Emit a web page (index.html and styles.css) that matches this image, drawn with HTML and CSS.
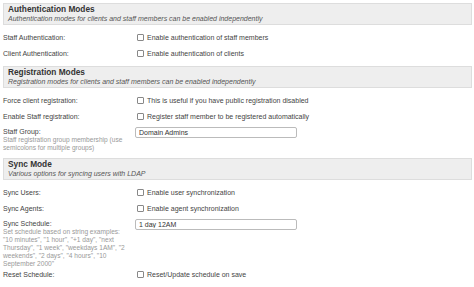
FILE: index.html
```html
<!DOCTYPE html>
<html lang="en">
<head>
  <meta charset="UTF-8">
  <title>LDAP Settings</title>
  <link rel="stylesheet" href="styles.css">
</head>
<body>
  <div class="settings">
    <!-- Authentication -->
    <div class="section-head">
      <div class="section-title">Authentication Modes</div>
      <div class="section-sub">Authentication modes for clients and staff members can be enabled independently</div>
    </div>
    <div class="row">
      <div class="label">Staff Authentication:</div>
      <label class="check"><span class="box"></span>Enable authentication of staff members</label>
    </div>
    <div class="row">
      <div class="label">Client Authentication:</div>
      <label class="check"><span class="box"></span>Enable authentication of clients</label>
    </div>

    <!-- Registration -->
    <div class="section-head">
      <div class="section-title">Registration Modes</div>
      <div class="section-sub">Registration modes for clients and staff members can be enabled independently</div>
    </div>
    <div class="row">
      <div class="label">Force client registration:</div>
      <label class="check"><span class="box"></span>This is useful if you have public registration disabled</label>
    </div>
    <div class="row">
      <div class="label">Enable Staff registration:</div>
      <label class="check"><span class="box"></span>Register staff member to be registered automatically</label>
    </div>
    <div class="row row-tall">
      <div class="label">Staff Group:
        <div class="help">Staff registration group membership (use semicolons for multiple groups)</div>
      </div>
      <div><input class="text-input" type="text" value="Domain Admins"></div>
    </div>

    <!-- Sync -->
    <div class="section-head">
      <div class="section-title">Sync Mode</div>
      <div class="section-sub">Various options for syncing users with LDAP</div>
    </div>
    <div class="row">
      <div class="label">Sync Users:</div>
      <label class="check"><span class="box"></span>Enable user synchronization</label>
    </div>
    <div class="row">
      <div class="label">Sync Agents:</div>
      <label class="check"><span class="box"></span>Enable agent synchronization</label>
    </div>
    <div class="row row-tall">
      <div class="label">Sync Schedule:
        <div class="help">Set schedule based on string examples: "10 minutes", "1 hour", "+1 day", "next Thursday", "1 week", "weekdays 1AM", "2 weekends", "2 days", "4 hours", "10 September 2000"</div>
      </div>
      <div><input class="text-input" type="text" value="1 day 12AM"></div>
    </div>
    <div class="row row-compact">
      <div class="label">Reset Schedule:</div>
      <label class="check"><span class="box"></span>Reset/Update schedule on save</label>
    </div>
  </div>
</body>
</html>
```

FILE: styles.css
```css
/* Base */
body {
  margin: 0;
  font-family: "Liberation Sans", Arial, sans-serif;
  font-size: 7px;
  color: #444;
  background-color: #fff;
}
.settings {
  padding: 3px 2px 0 3px;
}
/* Section headers */
.section-head {
  background-color: #eee;
  border: 1px solid #ddd;
  padding: 1px 5px 1px 4px;
  margin: 5px 0;
}
.section-head:first-child {
  margin-top: 0;
}
.section-title {
  font-size: 8.3px;
  font-weight: bold;
  color: #333;
  line-height: 9px;
}
.section-sub {
  font-style: italic;
  color: #555;
  line-height: 9px;
}
/* Rows */
.row {
  display: grid;
  grid-template-columns: 134px 1fr;
  align-items: center;
  min-height: 15.5px;
}
.row-tall {
  align-items: start;
  padding: 3px 0 1px;
}
.row-compact {
  min-height: 11px;
}
.label {
  line-height: 9px;
}
.help {
  color: #999;
  font-size: 6.6px;
  line-height: 8px;
  width: 128px;
}
.check {
  display: flex;
  align-items: center;
  gap: 3px;
}
.box {
  width: 5px;
  height: 5px;
  border: 1px solid #888;
  border-radius: 1px;
  background-color: #fff;
}
.text-input {
  box-sizing: border-box;
  width: 162px;
  height: 11px;
  margin: 0 0 0 -2px;
  padding: 0 3px;
  border: 1px solid #bbb;
  border-radius: 2px;
  font-family: "Liberation Sans", Arial, sans-serif;
  font-size: 7px;
  color: #333;
  outline: none;
}
```
